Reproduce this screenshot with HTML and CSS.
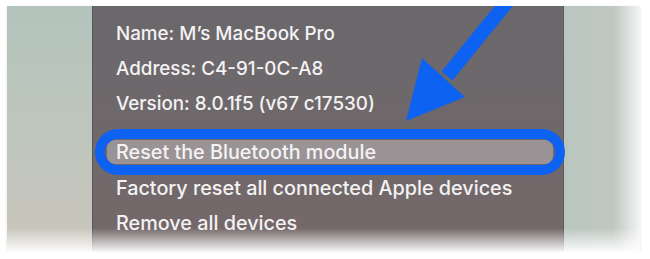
FILE: index.html
```html
<!DOCTYPE html>
<html lang="en">
<head>
  <meta charset="UTF-8">
  <title>Bluetooth menu</title>
  <link rel="stylesheet" href="styles.css">
</head>
<body>
  <div class="shot">
    <div class="side side-left"></div>
    <div class="menu">
      <div class="row info">Name: M’s MacBook Pro</div>
      <div class="row info">Address: C4-91-0C-A8</div>
      <div class="row info">Version: 8.0.1f5 (v67 c17530)</div>
      <div class="row row-selected">Reset the Bluetooth module</div>
      <div class="row">Factory reset all connected Apple devices</div>
      <div class="row">Remove all devices</div>
    </div>
    <div class="side side-right"></div>

    <!-- annotation -->
    <div class="ring"></div>
    <svg class="arrow" width="633" height="130" viewBox="0 0 633 130">
      <line x1="500" y1="-4" x2="440" y2="70" stroke="#0d62f2" stroke-width="14"/>
      <polygon points="415,52 458,91 399,115" fill="#0d62f2"/>
    </svg>
    <div class="fade"></div>
  </div>
</body>
</html>
```

FILE: styles.css
```css
body {
  margin: 0;
  background-color: #ffffff;
  font-family: 'Liberation Sans', Arial, sans-serif;
}

.shot {
  position: relative;
  width: 633px;
  height: 246px;
  margin: 6px 0 0 7px;
  display: grid;
  grid-template-columns: 85px 472px 1fr;
  overflow: hidden;
  box-shadow: 0 1px 3px rgba(0, 0, 0, 0.12);
}

.side-left {
  background: linear-gradient(180deg, #b3c4bc 0%, #bec6bd 50%, #cac5bc 100%);
}

.side-right {
  background: linear-gradient(90deg, #b9c6c0 0%, #c0c7c1 65%, #f3f4f3 100%);
}

.menu {
  background: linear-gradient(180deg, #6a686c 0%, #6f686b 50%, #756869 100%);
  border-left: 1px solid #57565a;
  border-right: 1px solid #5d5a5d;
  padding: 10px 10px 0 14px;
  color: #f4f2f3;
  font-family: Inter, 'Liberation Sans', sans-serif;
  font-weight: 500;
  font-size: 19.8px;
}

.row {
  height: 35px;
  line-height: 35px;
  padding-left: 9px;
  white-space: nowrap;
}

.info {
  font-size: 18.8px;
}

.row-selected {
  height: 24px;
  line-height: 24px;
  margin: 19px 0 7px 0;
  padding-left: 9px;
  background-color: #9a9396;
  border-radius: 8px;
}

.ring {
  position: absolute;
  left: 88px;
  top: 123px;
  width: 450px;
  height: 26px;
  border: 10px solid #0d62f2;
  border-radius: 24px;
}

.arrow {
  position: absolute;
  left: 0;
  top: 0;
}

.fade {
  position: absolute;
  left: 0;
  right: 0;
  bottom: 0;
  height: 24px;
  background: linear-gradient(180deg, rgba(255, 255, 255, 0) 0%, rgba(255, 255, 255, 0.95) 100%);
}
```
